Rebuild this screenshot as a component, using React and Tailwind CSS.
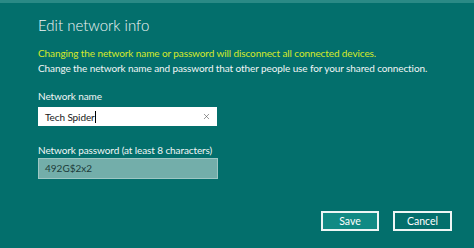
import React from 'react'
import { X } from 'lucide-react'

const App = () => {
  return (
    <div
      className="w-[474px] h-[248px] bg-[#036f6c] overflow-hidden text-[#f2f6f6] whitespace-nowrap"
      style={{ fontFamily: 'Lato, "Open Sans", sans-serif' }}
    >
      <div className="h-[3px] bg-[#2a8a86]" />
      <div className="pl-[38px] pr-[22px]">
        <h1 className="mt-[12px] text-[15px] leading-[20px] font-light">Edit network info</h1>
        <p className="mt-[11px] text-[10px] leading-[14px] tracking-[-0.1px] text-[#d6ea2a]">
          Changing the network name or password will disconnect all connected devices.
        </p>
        <p className="mt-[1px] text-[10px] leading-[14px] tracking-[-0.1px]">
          Change the network name and password that other people use for your shared connection.
        </p>

        <label className="block mt-[14px] text-[10px] leading-[14px] tracking-[-0.1px]">Network name</label>
        <div className="mt-[4px] w-[179px] h-[19px] bg-white flex items-center pl-[7px] pr-[6px] text-[#1a1a1a]">
          <span className="text-[10px] leading-[14px] tracking-[-0.1px]">Tech Spider</span>
          <span className="w-px h-[12px] bg-black" />
          <X className="ml-auto w-[9px] h-[9px] text-[#555]" strokeWidth={1.6} />
        </div>

        <label className="block mt-[17px] text-[10px] leading-[14px] tracking-[-0.1px]">
          Network password (at least 8 characters)
        </label>
        <div className="mt-[1px] w-[180px] h-[21px] bg-[#73aeaa] border border-[#9ec7c4] flex items-center pl-[6px] text-[10px] text-[#1c3b39]">
          492G$2x2
        </div>

        <div className="mt-[32px] flex justify-end gap-[14px]">
          <button className="w-[58px] h-[20px] border-2 border-[#eef6f5] bg-[#118a84] text-[10.5px] leading-[14px] text-white">
            Save
          </button>
          <button className="w-[59px] h-[20px] border-2 border-[#eef6f5] bg-[#036f6c] text-[10.5px] leading-[14px] text-white">
            Cancel
          </button>
        </div>
      </div>
    </div>
  )
}

export default App
